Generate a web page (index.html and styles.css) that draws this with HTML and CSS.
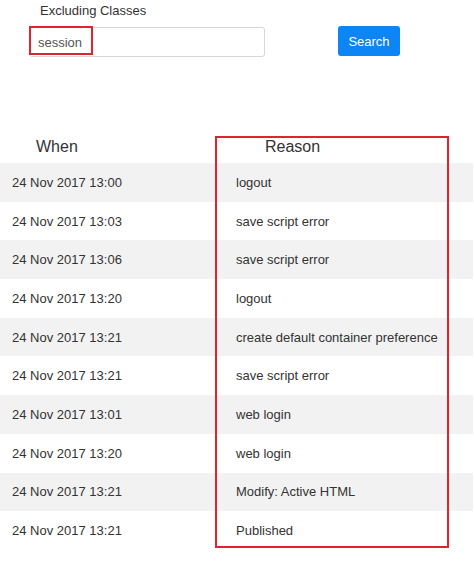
FILE: index.html
```html
<!DOCTYPE html>
<html>
<head>
<meta charset="utf-8">
<link rel="stylesheet" href="styles.css">
</head>
<body>
<div class="page">
  <form class="filter">
    <label class="filter-label">Excluding Classes</label>
    <div class="filter-row">
      <div class="field">
        <input class="text-input" type="text" value="session">
        <span class="mark mark-input"></span>
      </div>
      <button class="btn" type="button">Search</button>
    </div>
  </form>

  <div class="table-wrap">
    <table class="log">
      <colgroup>
        <col class="col-when">
        <col class="col-reason">
      </colgroup>
      <thead>
        <tr><th class="h-when">When</th><th class="h-reason">Reason</th></tr>
      </thead>
      <tbody>
        <tr><td>24 Nov 2017 13:00</td><td>logout</td></tr>
        <tr><td>24 Nov 2017 13:03</td><td>save script error</td></tr>
        <tr><td>24 Nov 2017 13:06</td><td>save script error</td></tr>
        <tr><td>24 Nov 2017 13:20</td><td>logout</td></tr>
        <tr><td>24 Nov 2017 13:21</td><td>create default container preference</td></tr>
        <tr><td>24 Nov 2017 13:21</td><td>save script error</td></tr>
        <tr><td>24 Nov 2017 13:01</td><td>web login</td></tr>
        <tr><td>24 Nov 2017 13:20</td><td>web login</td></tr>
        <tr><td>24 Nov 2017 13:21</td><td>Modify: Active HTML</td></tr>
        <tr><td>24 Nov 2017 13:21</td><td>Published</td></tr>
      </tbody>
    </table>
    <span class="mark mark-column"></span>
  </div>
</div>
</body>
</html>
```

FILE: styles.css
```css
html, body {
  margin: 0;
  padding: 0;
  background: #fff;
}
body {
  font-family: "Liberation Sans", Arial, sans-serif;
  color: #333;
  font-size: 13px;
}
.page {
  width: 474px;
}
.filter {
  margin: 0;
  padding-top: 3px;
}
.filter-label {
  display: block;
  padding-left: 40px;
  line-height: 16px;
  font-size: 13px;
  color: #333;
}
.filter-row {
  display: flex;
  align-items: flex-start;
  margin-top: 7px;
  padding-left: 29px;
}
.field {
  position: relative;
  width: 236px;
  margin-top: 1px;
}
.text-input {
  display: block;
  box-sizing: border-box;
  width: 236px;
  height: 30px;
  border: 1px solid #d6d6d6;
  border-radius: 3px;
  padding: 0 8px;
  font-family: "Liberation Sans", Arial, sans-serif;
  font-size: 13px;
  color: #555;
  background: #fff;
  outline: none;
}
.btn {
  margin-left: 73px;
  box-sizing: border-box;
  width: 62px;
  height: 30px;
  border: none;
  border-radius: 3px;
  background: #0d85f4;
  color: #fff;
  font-family: "Liberation Sans", Arial, sans-serif;
  font-size: 13px;
  padding: 0;
}
.mark {
  position: absolute;
  box-sizing: border-box;
  border: 2px solid #dc2530;
  pointer-events: none;
}
.mark-input {
  left: 0;
  top: -1px;
  width: 64px;
  height: 29px;
}
.table-wrap {
  position: relative;
  margin-top: 72px;
}
.log {
  width: 473px;
  border-collapse: collapse;
  table-layout: fixed;
}
.col-when {
  width: 224px;
}
.log th {
  box-sizing: border-box;
  height: 34px;
  padding: 2px 0 0;
  font-size: 16px;
  font-weight: normal;
  text-align: left;
  color: #333;
}
.log th.h-when {
  padding-left: 36px;
}
.log th.h-reason {
  padding-left: 41px;
}
.log td {
  height: 38.7px;
  padding: 0 12px;
  font-size: 13px;
  color: #333;
  white-space: nowrap;
}
.log tbody tr:nth-child(odd) {
  background: #f2f2f2;
}
.mark-column {
  left: 215px;
  top: 7px;
  width: 234px;
  height: 412px;
}
```
